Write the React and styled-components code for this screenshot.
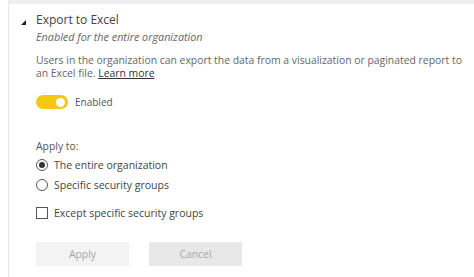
import React, { useState } from "react";
import styled, { createGlobalStyle } from "styled-components";

const GlobalStyle = createGlobalStyle`
    html, body {
        margin: 0;
        padding: 0;
        background: #ffffff;
    }
    body {
        font-family: "Open Sans", "Noto Sans", sans-serif;
        color: #505050;
    }
`

const Page = styled.div`
    width: 474px;
    height: 277px;
    padding-left: 8px;
    box-sizing: border-box;
    overflow: hidden;
`

const Card = styled.div`
    height: 100%;
    box-sizing: border-box;
    border-top: 4px solid #efefef;
    border-left: 1px solid #e6e6e6;
    padding: 8px 8px 0 12px;
    display: grid;
    grid-template-columns: 15px 1fr;
`

const Caret = styled.svg`
    width: 5px;
    height: 5px;
    margin-top: 8px;
`

const Body = styled.div`
    display: flex;
    flex-direction: column;
`

const Title = styled.div`
    font-size: 12px;
    line-height: 16px;
    color: #444;
`

const Subtitle = styled.div`
    font-size: 10.8px;
    line-height: 13px;
    font-style: italic;
    color: #666;
    margin-top: 2px;
`

const Desc = styled.p`
    font-size: 10.4px;
    line-height: 13px;
    color: #666;
    margin: 11px 0 0 0;
`

const Link = styled.a`
    display: inline-block;
    line-height: 13px;
    color: #333;
    text-decoration: underline;
`

const ToggleRow = styled.label`
    display: flex;
    align-items: center;
    gap: 7px;
    margin-top: 15px;
    font-size: 10px;
    line-height: 14px;
    color: #555;
`

const Track = styled.span`
    width: 32px;
    height: 14px;
    border-radius: 7px;
    background: ${({ on }) => (on ? "#f2c811" : "#c8c8c8")};
    display: flex;
    align-items: center;
    justify-content: ${({ on }) => (on ? "flex-end" : "flex-start")};
    padding: 0 3px;
    box-sizing: border-box;
`

const Knob = styled.span`
    width: 9px;
    height: 9px;
    border-radius: 50%;
    background: #fff;
`

const Label = styled.div`
    font-size: 10.4px;
    line-height: 13px;
    color: #555;
    margin-top: 31px;
`

const Option = styled.label`
    display: flex;
    align-items: center;
    gap: 6px;
    height: 14px;
    font-size: 10.5px;
    color: #444;
    margin-top: ${({ gap }) => gap}px;
`

const Radio = styled.span`
    width: 12px;
    height: 12px;
    border-radius: 50%;
    border: 1px solid #555;
    box-sizing: border-box;
    display: flex;
    align-items: center;
    justify-content: center;

    &::after {
        content: "";
        width: 6px;
        height: 6px;
        border-radius: 50%;
        background: ${({ checked }) => (checked ? "#333" : "transparent")};
    }
`

const Box = styled.span`
    width: 12px;
    height: 12px;
    border: 1px solid #555;
    box-sizing: border-box;
`

const Buttons = styled.div`
    display: flex;
    gap: 20px;
    margin-top: 22px;
`

const Button = styled.button`
    width: 93px;
    height: 24px;
    border: none;
    font-family: inherit;
    font-size: 10.4px;
    color: #a6a6a6;
    background: ${({ secondary }) => (secondary ? "#e8e8e8" : "#f3f3f3")};
`

const App = () => {
    const [enabled, setEnabled] = useState(true)
    const [scope, setScope] = useState("all")
    const [except, setExcept] = useState(false)

    return (
        <>
        <GlobalStyle />
        <Page>
            <Card>
                <Caret viewBox="0 0 5 5">
                    <polygon points="5,0 5,5 0,5" fill="#222" />
                </Caret>
                <Body>
                    <Title>Export to Excel</Title>
                    <Subtitle>Enabled for the entire organization</Subtitle>
                    <Desc>
                        Users in the organization can export the data from a visualization or paginated report to
                        an Excel file. <Link href="#">Learn more</Link>
                    </Desc>
                    <ToggleRow onClick={() => setEnabled(!enabled)}>
                        <Track on={enabled}><Knob /></Track>
                        {enabled ? "Enabled" : "Disabled"}
                    </ToggleRow>
                    <Label>Apply to:</Label>
                    <Option gap={5} onClick={() => setScope("all")}>
                        <Radio checked={scope === "all"} />
                        The entire organization
                    </Option>
                    <Option gap={6} onClick={() => setScope("groups")}>
                        <Radio checked={scope === "groups"} />
                        Specific security groups
                    </Option>
                    <Option gap={14} onClick={() => setExcept(!except)}>
                        <Box />
                        Except specific security groups
                    </Option>
                    <Buttons>
                        <Button>Apply</Button>
                        <Button secondary>Cancel</Button>
                    </Buttons>
                </Body>
            </Card>
        </Page>
        </>
    )
}

export default App
